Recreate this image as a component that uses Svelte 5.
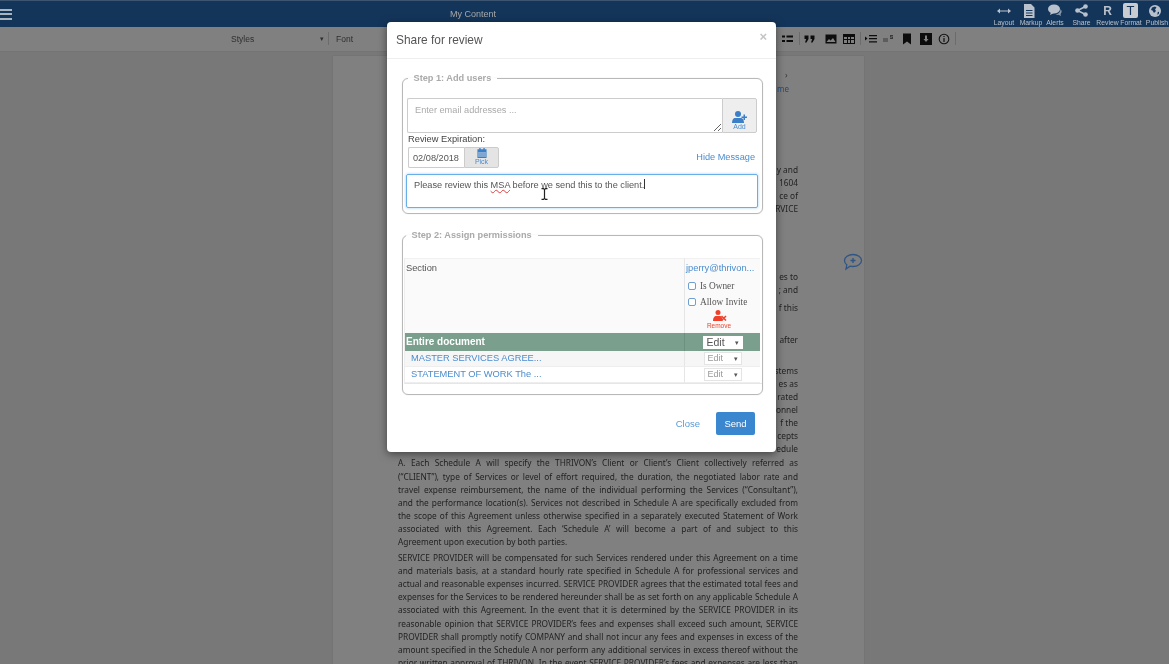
<script>
  const tools = [
    { d: 'M1 3.500h3v2H1zM1 8h3v2H1zM5.500 3.500H12v2H5.500zM5.500 8H12v2H5.500z', ml: 0 },
    { sep: true, ml: 4 },
    { d: 'M1.500 3.500h4v3.500L3.500 10.500H2L3.200 7H1.500zM7.500 3.500h4v3.500L9.500 10.500H8L9.200 7H7.500z', ml: 3 },
    { d: 'M1.500 2.500h11v9h-11zM2.500 10h9L9 6 6.500 8.500 5 7z', odd: true, ml: 7 },
    { d: 'M1 2h12v10H1zM2 5v2h3V5zM6 5v2h2V5zM9 5v2h3V5zM2 8v3h3V8zM6 8v3h2V8zM9 8v3h3V8z', odd: true, ml: 4 },
    { sep: true, ml: 4 },
    { d: 'M1 4.500l2.500 2-2.500 2zM5 3h8v1.300H5zM5 6h8v1.300H5zM5 9.200h8v1.300H5z', ml: 3 },
    { d: 'M2 6.500h5v1H2zM2 8.500h5v1H2zM9 3h3v1.200h-2v.6h2V7H9V6h2v-.4H9z', ml: 3, faint: true },
    { d: 'M3 1.500h8v11L7 9.500l-4 3z', ml: 5 },
    { d: 'M1 1h12v12H1zM6 3.500V7H4.500L7 10l2.500-3H8V3.500z', odd: true, ml: 5 }
  ];
  const actions = [
    { label: 'Layout', kind: 'layout', w: 30 },
    { label: 'Markup', kind: 'file', w: 24 },
    { label: 'Alerts', kind: 'chat', w: 24 },
    { label: 'Share', kind: 'share', w: 29 },
    { label: 'Review', kind: 'r', w: 23 },
    { label: 'Format', kind: 't', w: 24 },
    { label: 'Publish', kind: 'globe', w: 28 }
  ];
  const upper = [
    { t: 'ly and' }, { t: '1604' }, { t: 'ce of' }, { t: 'RVICE' },
    { t: 'es to', gap: 55 }, { t: '; and' },
    { t: 'f this', gap: 4 },
    { t: 'after', gap: 19 },
    { t: 'stems', gap: 18 }, { t: 'es as' }, { t: 'rated' }, { t: 'onnel' }, { t: 'f the' }, { t: 'cepts' }, { t: 'edule' }
  ];
  const para1 = [
    'A. Each Schedule A will specify the THRIVON’s Client or Client’s Client collectively referred as',
    '(“CLIENT”), type of Services or level of effort required, the duration, the negotiated labor rate and',
    'travel expense reimbursement, the name of the individual performing the Services (“Consultant”),',
    'and the performance location(s). Services not described in Schedule A are specifically excluded from',
    'the scope of this Agreement unless otherwise specified in a separately executed Statement of Work',
    'associated with this Agreement. Each ‘Schedule A’ will become a part of and subject to this'
  ];
  const para2 = [
    'SERVICE PROVIDER will be compensated for such Services rendered under this Agreement on a time',
    'and materials basis, at a standard hourly rate specified in Schedule A for professional services and',
    'actual and reasonable expenses incurred. SERVICE PROVIDER agrees that the estimated total fees and',
    'expenses for the Services to be rendered hereunder shall be as set forth on any applicable Schedule A',
    'associated with this Agreement. In the event that it is determined by the SERVICE PROVIDER in its',
    'reasonable opinion that SERVICE PROVIDER’s fees and expenses shall exceed such amount, SERVICE',
    'PROVIDER shall promptly notify COMPANY and shall not incur any fees and expenses in excess of the',
    'amount specified in the Schedule A nor perform any additional services in excess thereof without the',
    'prior written approval of THRIVON. In the event SERVICE PROVIDER’s fees and expenses are less than'
  ];
</script>

<div class="root">
  <header class="top">
    <button class="burger" aria-label="Menu"><i></i><i></i><i></i></button>
    <div class="title">My Content</div>
    <nav class="actions">
      {#each actions as a}
        <div class="action" style="width:{a.w}px">
          <div class="aicon" class:on={a.kind === 't'} class:nudge={a.kind === 'file' || a.kind === 'globe'}>
            {#if a.kind === 'layout'}
              <svg width="14" height="12" viewBox="0 0 14 12"><path d="M0 6l3-2.500v2h8v-2L14 6l-3 2.500v-2H3v2z" fill="#b9c2cc"/></svg>
            {:else if a.kind === 'file'}
              <svg width="12" height="14" viewBox="0 0 12 14"><path fill-rule="evenodd" d="M1 0h7l3.500 3.500V14H1zM3 6v1h6.500V6zM3 8.500v1h6.500v-1zM3 11v1h6.500v-1z" fill="#b9c2cc"/></svg>
            {:else if a.kind === 'chat'}
              <svg width="14" height="13" viewBox="0 0 14 13"><ellipse cx="6" cy="5" rx="6" ry="4.500" fill="#b9c2cc"/><path d="M3 8L2 11l4-2z" fill="#b9c2cc"/><path d="M12.500 5c1.500 1.500 1.500 3.500 0 5l.5 2-2.500-1.200c-1 .2-2 0-3-.5 2.500 0 5-2 5-5.300z" fill="#8b9bad"/></svg>
            {:else if a.kind === 'share'}
              <svg width="13" height="13" viewBox="0 0 13 13"><path d="M10.500 2.500L2.500 6.500l8 4" fill="none" stroke="#b9c2cc" stroke-width="1.500"/><circle cx="10.500" cy="2.500" r="2.300" fill="#b9c2cc"/><circle cx="2.500" cy="6.500" r="2.300" fill="#b9c2cc"/><circle cx="10.500" cy="10.500" r="2.300" fill="#b9c2cc"/></svg>
            {:else if a.kind === 'r'}
              <span class="letter">R</span>
            {:else if a.kind === 't'}
              <span class="letter dark">T</span>
            {:else}
              <svg width="12" height="12" viewBox="0 0 12 12"><circle cx="6" cy="6" r="6" fill="#b9c2cc"/><path d="M3 2.500l3-1 1.500 1L6 4.500 7 6 5 8 3.500 5.500 2 5zM8.500 7.500l1.500-1v2l-1.500 1.500z" fill="#14355a"/></svg>
            {/if}
          </div>
          <span>{a.label}</span>
        </div>
      {/each}
    </nav>
  </header>

  <div class="toolbar">
    <span class="styles">Styles</span>
    <span class="caret">▾</span>
    <span class="tsep"></span>
    <span class="font">Font</span>
    <div class="tools">
      {#each tools as t}
        {#if t.sep}
          <span class="tsep" style="margin-left:{t.ml}px"></span>
        {:else}
          <svg width="14" height="14" viewBox="0 0 14 14" style="margin-left:{t.ml}px"><path d={t.d} fill={t.faint ? '#3a3a3a' : '#0c0c0c'} fill-rule={t.odd ? 'evenodd' : 'nonzero'}/></svg>
        {/if}
      {/each}
      <svg width="14" height="14" viewBox="0 0 14 14" class="info"><circle cx="7" cy="7" r="4.800" fill="none" stroke="#111" stroke-width="1.100"/><path d="M6.400 3.900h1.200v1.200H6.400zM6.400 6h1.200v4H6.400z" fill="#111"/></svg>
      <span class="tsep last"></span>
    </div>
  </div>

  <main class="work">
    <article class="page">
      <div class="dot">›</div>
      <div class="lnk">me</div>
      <div class="upper">
        {#each upper as l}
          <div class="frag" style="margin-top:{l.gap ?? 0}px">{l.t}</div>
        {/each}
      </div>
      <div class="para">
        {#each para1 as l}<div class="j">{l}</div>{/each}
        <div>Agreement upon execution by both parties.</div>
      </div>
      <div class="para second">
        {#each para2 as l}<div class="j">{l}</div>{/each}
      </div>
    </article>
    <svg class="bubble" width="20" height="18" viewBox="0 0 20 18"><path d="M10 1.500c4.700 0 8.500 2.700 8.500 6s-3.800 6-8.500 6c-1 0-2-.1-3-.4L3 16l.8-4.200C2.300 10.700 1.500 9.200 1.500 7.500c0-3.300 3.800-6 8.500-6z" fill="none" stroke="#2f5585" stroke-width="1.300"/><path d="M9.300 5h1.400v1.800h1.800v1.400h-1.800V10H9.300V8.200H7.500V6.800h1.800z" fill="#2f5585"/></svg>
  </main>

  <section class="modal" role="dialog" aria-label="Share for review">
    <div class="mhead">
      <h2>Share for review</h2>
      <span class="close">×</span>
    </div>
    <div class="mbody">
      <fieldset class="step one">
        <legend>Step 1: Add users</legend>
        <div class="emails">
          <textarea placeholder="Enter email addresses ..."></textarea>
          <div class="addon add">
            <svg width="16" height="12" viewBox="0 0 16 12"><circle cx="6" cy="3" r="3" fill="#3a7fc8"/><path d="M0 12c0-3.500 1.500-5 3-5h6c1.500 0 3 1.500 3 5z" fill="#3a7fc8"/><path d="M11.500 3.500h1.500V5.500h2v1.500h-2v2h-1.500V7h-2V5.500h2z" fill="#3a7fc8"/></svg>
            <span>Add</span>
          </div>
        </div>
        <label class="exp" for="exp">Review Expiration:</label>
        <div class="daterow">
          <input id="exp" class="date" value="02/08/2018" readonly />
          <div class="addon pick">
            <svg width="10" height="11" viewBox="0 0 10 11"><path fill-rule="evenodd" d="M0 1.500h2V0h1.500v1.500h3V0H8v1.500h2V11H0zM1 4.500V10h8V4.500z" fill="#3a7fc8"/><path d="M1 4.500h8V10H1z" fill="#3a7fc8" opacity=".6"/></svg>
            <span>Pick</span>
          </div>
          <a class="hide" href="#hide">Hide Message</a>
        </div>
        <div class="message">Please review this <u>MSA</u> before we send this to the client.<i class="txtcaret"></i></div>
      </fieldset>

      <fieldset class="step two">
        <legend>Step 2: Assign permissions</legend>
        <div class="grid">
          <div class="cell headl">Section</div>
          <div class="cell headr">
            <a class="user" href="#user">jperry@thrivon...</a>
            <div class="chk"><i></i>Is Owner</div>
            <div class="chk"><i></i>Allow Invite</div>
            <div class="remove">
              <svg width="15" height="11" viewBox="0 0 15 11"><circle cx="6" cy="2.500" r="2.500" fill="#f0402a"/><path d="M1 11c0-4 2-5 3-5h4c1 0 2.500 1 2.500 5z" fill="#f0402a"/><path d="M9.500 6l4.500 4.500M14 6l-4.500 4.500" stroke="#f0402a" stroke-width="1.500"/></svg>
              <span>Remove</span>
            </div>
          </div>
          <div class="cell entire">Entire document</div>
          <div class="cell entire r"><div class="sel big"><span>Edit</span><b>▾</b></div></div>
          <div class="cell row alt"><a href="#s1">MASTER SERVICES AGREE...</a></div>
          <div class="cell row alt r"><div class="sel"><span>Edit</span><b>▾</b></div></div>
          <div class="cell row"><a href="#s2">STATEMENT OF WORK The ...</a></div>
          <div class="cell row r"><div class="sel"><span>Edit</span><b>▾</b></div></div>
        </div>
      </fieldset>
    </div>
    <div class="mfoot">
      <a class="closebtn" href="#close">Close</a>
      <button class="send">Send</button>
    </div>
  </section>

  <svg class="ibeam" width="7" height="12" viewBox="0 0 7 12"><path d="M.5.700h2L3.500 1.700 4.500.700h2M3.500 1.700v8.600M.5 11.300h2l1-1 1 1h2" fill="none" stroke="#222" stroke-width="1.200"/></svg>
</div>

<style>
  :global(body) { margin: 0; background: #787878; }
  .root {
    position: relative;
    width: 100%;
    height: 100vh;
    overflow: hidden;
    font-family: "Liberation Sans", Arial, sans-serif;
    filter: blur(0.5px);
    display: flex;
    flex-direction: column;
    background: #787878;
  }
  .top {
    height: 27px;
    flex: none;
    box-sizing: border-box;
    background: #14355a;
    border-top: 1px solid #3d5570;
    display: flex;
    align-items: center;
    color: #c8cdd3;
  }
  .burger {
    width: 12px;
    height: 11px;
    padding: 0;
    border: 0;
    background: none;
    display: flex;
    flex-direction: column;
    justify-content: space-between;
  }
  .burger i { display: block; height: 2px; background: #aab4bf; }
  .title { margin-left: 438px; font-size: 9px; color: #a8a8a8; }
  .actions { margin-left: auto; display: flex; margin-right: -2px; }
  .action {
    display: flex;
    flex-direction: column;
    align-items: center;
    font-size: 6.800px;
    color: #b9c2cc;
    white-space: nowrap;
  }
  .aicon { height: 16px; display: flex; align-items: center; justify-content: center; }
  .aicon.nudge { margin-right: 5px; }
  .aicon.on { background: #c8ccd0; width: 15px; height: 15px; margin: 0 1px 1px 0; border-radius: 2px; }
  .letter { font-size: 12px; font-weight: 700; color: #b9c2cc; }
  .letter.dark { color: #14355a; font-weight: 400; font-size: 13px; }
  .toolbar {
    height: 25px;
    flex: none;
    box-sizing: border-box;
    padding-bottom: 1px;
    background: #808080;
    display: flex;
    align-items: center;
    font-size: 8.500px;
    color: #2e2e2e;
    border-bottom: 1px solid #747474;
  }
  .styles { margin-left: 231px; width: 89px; }
  .caret { width: 8px; font-size: 7px; }
  .tsep { width: 1px; height: 13px; background: #6c6c6c; flex: none; }
  .font { margin-left: 7px; }
  .tools { margin-left: 428px; display: flex; align-items: center; }
  .info { margin-left: 4px; }
  .tsep.last { margin-left: 4px; }
  .work { flex: 1; position: relative; display: flex; min-height: 0; }
  .page {
    position: relative;
    margin: 4px 0 0 333px;
    width: 531px;
    box-sizing: border-box;
    padding: 107px 66px 0 65px;
    background: #808080;
    box-shadow: 0 0 1px #666;
    font-family: "Noto Sans", "DejaVu Sans", sans-serif;
    font-size: 8.300px;
    line-height: 13.100px;
    color: #222;
  }
  .dot { position: absolute; left: 452px; top: 12px; color: #333; }
  .lnk { position: absolute; right: 75px; top: 26px; color: #1e4d80; font-size: 8px; }
  .frag { text-align: right; }
  .para { margin-top: 1px; }
  .second { margin-top: 3px; }
  .j { text-align: justify; text-align-last: justify; }
  .bubble { position: absolute; left: 843px; top: 201px; }
  .modal {
    position: absolute;
    left: 387px;
    top: 22px;
    width: 389px;
    height: 430px;
    box-sizing: border-box;
    background: #fff;
    border-radius: 4px;
    box-shadow: 0 2px 8px rgba(0,0,0,.5);
    display: flex;
    flex-direction: column;
    color: #555;
  }
  .mhead {
    height: 36px;
    flex: none;
    display: flex;
    align-items: center;
    justify-content: space-between;
    padding: 0 9px 0 9px;
    border-bottom: 1px solid #eee;
  }
  .mhead h2 { margin: 0; font-size: 11.900px; font-weight: 400; color: #555; }
  .close { font-size: 13px; color: #c4c4c4; font-weight: 700; margin: -7px 0 0; }
  .mbody { padding: 14px 13px 0 15px; flex: 1; }
  .step {
    margin: 0;
    padding: 0;
    min-width: 0;
    border: 1.500px solid #b8b8b8;
    border-radius: 6px;
    box-shadow: 0 0 1px #ccc;
  }
  .step legend {
    margin-left: 1.500px;
    padding: 0 6px;
    font-size: 9.200px;
    font-weight: 700;
    color: #aaa;
    line-height: 11px;
  }
  .one { height: 141px; box-sizing: border-box; padding: 14px 5px 0 3px; }
  .emails { display: flex; margin-left: 1px; height: 35px; }
  textarea {
    flex: 1;
    min-width: 0;
    box-sizing: border-box;
    border: 1px solid #ccc;
    border-right: 0;
    border-radius: 2px 0 0 2px;
    padding: 6px 7px;
    margin: 0;
    font: 9.200px "Liberation Sans", Arial, sans-serif;
    outline: none;
  }
  textarea::placeholder { color: #aaa; }
  .addon {
    background: #eee;
    border: 1px solid #ccc;
    box-sizing: border-box;
    display: flex;
    flex-direction: column;
    align-items: center;
    justify-content: flex-end;
    color: #4a8ccf;
    font-size: 7px;
    line-height: 8px;
    border-radius: 0 2px 2px 0;
  }
  .add { width: 35px; padding-bottom: 1px; }
  .exp { display: block; font-size: 9.300px; line-height: 11px; margin: 1px 0 0 2px; color: #444; }
  .daterow { display: flex; align-items: stretch; height: 21px; margin: 2px 0 0 2px; }
  .date {
    width: 56px;
    box-sizing: border-box;
    border: 1px solid #ccc;
    border-right: 0;
    border-radius: 2px 0 0 2px;
    padding: 0 4px;
    margin: 0;
    font: 9.200px "Liberation Sans", Arial, sans-serif;
    color: #555;
    outline: none;
  }
  .pick { width: 35px; padding-bottom: 1px; background: #e4e4e4; }
  .hide { margin: 0 2px 0 auto; line-height: 21px; font-size: 9.200px; color: #4a8ccf; text-decoration: none; }
  .message {
    box-sizing: border-box;
    height: 34px;
    margin: 6px 0 0;
    width: 352px;
    border: 1px solid #66afe9;
    box-shadow: 0 0 3px rgba(102,175,233,.6);
    border-radius: 2px;
    padding: 4px 7px;
    font-size: 9.200px;
    line-height: 11px;
    color: #555;
  }
  .message u { text-decoration: underline wavy #e04040 1px; text-underline-offset: 1px; }
  .txtcaret { display: inline-block; width: 1px; height: 10px; background: #333; vertical-align: -1px; }
  .two { margin-top: 16px; height: 165px; box-sizing: border-box; padding: 17px 0 0 1px; }
  .grid {
    display: grid;
    grid-template-columns: 279px 76px;
    border-bottom: 1px solid #e6e6e6;
    border-left: 1px solid #eee;
    font-size: 9.300px;
  }
  .cell { box-sizing: border-box; }
  .headl { height: 75px; background: #fafafa; padding: 4px 1px; color: #555; border-top: 1px solid #f0f0f0; }
  .headr { height: 75px; background: #fafafa; border-left: 1px solid #e6e6e6; border-top: 1px solid #f0f0f0; padding: 4px 0 0 1px; overflow: hidden; }
  .user { color: #4a8ccf; text-decoration: none; display: block; white-space: nowrap; }
  .chk {
    display: flex;
    align-items: center;
    font: 9.300px "Liberation Serif", "Times New Roman", serif;
    color: #555;
    margin: 8px 0 0 2px;
    height: 10px;
    gap: 4px;
  }
  .chk + .chk { margin-top: 6px; }
  .chk i { width: 6px; height: 6px; border: 1px solid #6f9fd0; border-radius: 2px; background: #fff; }
  .remove { display: flex; flex-direction: column; align-items: center; color: #f0402a; font-size: 6.500px; line-height: 6px; gap: 2px; margin-top: 3px; margin-right: 8px; }
  .entire {
    height: 18px;
    background: #7a9f8d;
    color: #fff;
    font-weight: 700;
    font-size: 10px;
    line-height: 17px;
    padding-left: 1px;
  }
  .r { display: flex; align-items: center; justify-content: center; padding: 0; border-left: 1px solid #6d9180; }
  .row { height: 16px; line-height: 15px; padding-left: 6px; border-bottom: 1px solid #eee; }
  .row.r { border-left: 1px solid #e6e6e6; padding: 0; }
  .row.alt { background: #f6f6f6; }
  .row a { color: #4a8ccf; text-decoration: none; white-space: nowrap; }
  .sel {
    width: 38px;
    height: 13px;
    background: #fff;
    border: 1px solid #e4e4e4;
    display: flex;
    align-items: center;
    justify-content: space-between;
    box-sizing: border-box;
    padding: 0 3px;
    color: #999;
    font-size: 9px;
    font-weight: 400;
  }
  .sel b { font-size: 7px; color: #555; font-weight: 400; }
  .sel.big { width: 40px; height: 13px; color: #555; font-size: 10.500px; border-color: #fff; }
  .mfoot {
    height: 56px;
    flex: none;
    box-sizing: border-box;
    padding: 0 21px 1px 0;
    display: flex;
    align-items: center;
    justify-content: flex-end;
    gap: 16px;
  }
  .closebtn { color: #5a9ad6; font-size: 9.500px; text-decoration: none; }
  .send {
    width: 39px;
    height: 23px;
    padding: 0;
    border: 0;
    border-radius: 2px;
    background: #3a86cf;
    color: #fff;
    font: 9.500px "Liberation Sans", Arial, sans-serif;
  }
  .ibeam { position: absolute; left: 541px; top: 188px; }
</style>
